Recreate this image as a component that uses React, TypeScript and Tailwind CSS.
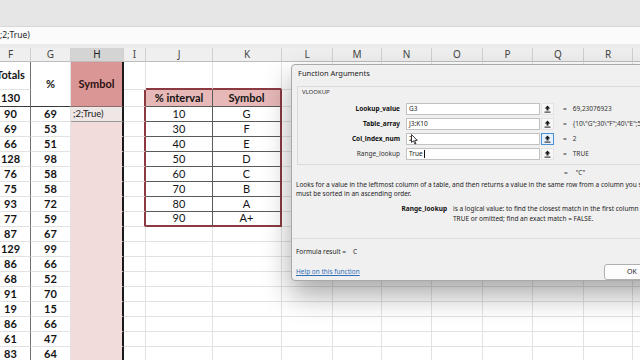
import React from "react";

const F_VALS = [90, 69, 66, 128, 76, 75, 93, 77, 87, 129, 86, 68, 91, 19, 86, 61, 83];
const G_VALS = [69, 53, 51, 98, 58, 58, 72, 59, 67, 99, 66, 52, 70, 15, 66, 47, 64];
const LOOKUP = [
  ["10", "G"],
  ["30", "F"],
  ["40", "E"],
  ["50", "D"],
  ["60", "C"],
  ["70", "B"],
  ["80", "A"],
  ["90", "A+"],
];
const LETTERS = ["F", "G", "H", "I", "J", "K", "L", "M", "N", "O", "P", "Q", "R", "S"];
const ROWS = 19;

const FIELDS = [
  { label: "Lookup_value", bold: true, value: "G3", result: "69,23076923" },
  {
    label: "Table_array",
    bold: true,
    value: "J3:K10",
    result: '{10\\"G";30\\"F";40\\"E";50\\"D";60\\"C";70\\"B";80\\"A";90\\"A+"}',
  },
  { label: "Col_index_num", bold: true, value: "2", result: "2" },
  { label: "Range_lookup", bold: false, value: "True", result: "TRUE" },
];

function Cell({ r, c }: { r: number; c: number }) {
  const inTable = (c === 4 || c === 5) && r >= 1 && r <= 9;

  let right = "border-r border-r-[#e2e2e2]";
  if (c === 0) right = "border-r border-r-[#707070]";
  else if (c === 2) right = "border-r-2 border-r-[#1a1a1a]";
  else if (c === 3 && r >= 1 && r <= 9) right = "border-r-2 border-r-[#8b3a42]";
  else if (c === 4 && inTable) right = "border-r border-r-[#5a5a5a]";
  else if (c === 5 && inTable) right = "border-r-2 border-r-[#8b3a42]";

  let bottom = "border-b border-b-[#e2e2e2]";
  if (c === 0 && r === 1) bottom = "border-b border-b-[#3a3a3a]";
  else if (c === 1 && r === 0) bottom = "border-b border-b-[#3a3a3a]";
  else if ((c === 4 || c === 5) && r === 0) bottom = "border-b-2 border-b-[#8b3a42]";
  else if (inTable && r < 9) bottom = "border-b border-b-[#5a5a5a]";
  else if (inTable && r === 9) bottom = "border-b-2 border-b-[#8b3a42]";
  else if (c === 2 && r === 0) bottom = "border-b border-b-[#8c6d6d]";
  else if (c === 2 && r === 2) bottom = "border-b border-b-[#9a9a9a]";
  else if (c === 2 && r >= 3) bottom = "border-b border-b-[#f2dcdb]";

  let bg = "";
  if (c === 2 && r === 0) bg = "bg-[#da9694]";
  else if (c === 2 && r === 2) bg = "bg-[#efe6e6]";
  else if (c === 2 && r >= 3) bg = "bg-[#f2dcdb]";
  else if (inTable && r === 1) bg = "bg-[#e6b8b7]";

  const span = (c === 1 || c === 2) && r === 0 ? "row-span-2" : "";

  let text: React.ReactNode = null;
  let style = "justify-center text-[11px] font-bold text-[#141414]";
  if (c === 0) text = r === 0 ? "Totals" : r === 1 ? "130" : F_VALS[r - 2];
  else if (c === 1) text = r === 0 ? "%" : G_VALS[r - 2];
  else if (c === 2 && r === 0) {
    text = "Symbol";
    style = "justify-center text-[11px] font-bold text-[#2d1010]";
  } else if (c === 2 && r === 2) {
    text = ";2;True)";
    style = "justify-start pl-[2px] text-[9.5px] text-[#222]";
  } else if (inTable && r === 1) text = c === 4 ? "% interval" : "Symbol";
  else if (inTable) {
    text = LOOKUP[r - 2][c - 4];
    style = "justify-center text-[11px] text-[#141414]";
  }

  return (
    <div className={`flex items-center overflow-hidden whitespace-nowrap ${right} ${bottom} ${bg} ${span} ${style}`}>
      {text}
    </div>
  );
}

function CollapseIcon() {
  return (
    <svg width="7" height="8" viewBox="0 0 7 8">
      <path d="M3.5 0.4 L6.3 3.6 H4.5 V5.6 H2.5 V3.6 H0.7 Z" fill="#1a1a1a" />
      <rect x="0.5" y="6.6" width="6" height="1" fill="#1a1a1a" />
    </svg>
  );
}

function Pointer() {
  return (
    <svg width="7" height="11" viewBox="0 0 7 11" className="absolute left-[4px] top-[0px]">
      <path d="M0.5 0.5 L0.5 8.5 L2.5 6.8 L3.9 10 L5 9.5 L3.7 6.4 L6.3 6.4 Z" fill="#fff" stroke="#111" strokeWidth="0.8" />
    </svg>
  );
}

function FunctionDialog() {
  return (
    <div className="absolute left-[291px] top-[64px] w-[380px] h-[217px] rounded-[4px] border border-[#a9a9a9] bg-[#f0f0f0] shadow-[0_14px_28px_rgba(0,0,0,0.34)] font-['Noto_Sans',sans-serif] text-[6.5px] text-[#1e1e1e] flex flex-col">
      <div className="h-[18px] flex items-center pl-[6px] text-[7.5px] text-[#222]">Function Arguments</div>
      <div className="mx-[5px] mt-[3px] border border-[#dadada] pb-[3px]">
        <div className="h-[10px] flex items-center pl-[4px] text-[6px] text-[#333]">VLOOKUP</div>
        <div className="mt-[4px] flex flex-col">
          {FIELDS.map((f, i) => (
            <div key={f.label} className="h-[15px] flex items-center">
              <div className={`shrink-0 w-[102px] text-right ${f.bold ? "font-bold text-[#111]" : "text-[#333]"}`}>{f.label}</div>
              <div className="relative shrink-0 ml-[6px] w-[134px] h-[12px] bg-white border border-[#c2c2c2] flex items-center pl-[2px] text-[#222]">
                {f.value}
                {i === 3 && <span className="ml-[1px] w-[1px] h-[8px] bg-[#111]" />}
                {i === 2 && <Pointer />}
              </div>
              <div
                className={`shrink-0 ml-[1px] w-[13px] h-[12px] flex items-center justify-center border ${
                  i === 2 ? "border-[#4a90d9] bg-[#e5f1fb]" : "border-[#e4e4e4] bg-[#f7f7f7]"
                }`}
              >
                <CollapseIcon />
              </div>
              <div className="shrink-0 ml-[9px] text-[#333]">=</div>
              <div className="ml-[6px] whitespace-nowrap text-[#333]">{f.result}</div>
            </div>
          ))}
        </div>
      </div>
      <div className="mt-[2px] h-[12px] flex items-center pl-[272px] text-[#333]">
        =<span className="ml-[8px]">"C"</span>
      </div>
      <div className="mt-[1px] pl-[4px] leading-[9px] whitespace-nowrap">
        <div>Looks for a value in the leftmost column of a table, and then returns a value in the same row from a column you specify. By default, the table</div>
        <div>must be sorted in an ascending order.</div>
      </div>
      <div className="mt-[6px] flex leading-[10px] whitespace-nowrap">
        <div className="shrink-0 w-[155px] text-right font-bold text-[#111]">Range_lookup</div>
        <div className="ml-[6px]">
          <div>is a logical value: to find the closest match in the first column (sorted in ascending order) =</div>
          <div>TRUE or omitted; find an exact match = FALSE.</div>
        </div>
      </div>
      <div className="mt-[14px] border-t border-[#dedede]" />
      <div className="mt-[7px] h-[12px] flex items-center pl-[4px]">
        <span className="w-[57px]">Formula result =</span>
        <span>C</span>
      </div>
      <div className="mt-[6px] h-[16px] flex items-center pl-[4px]">
        <span className="flex-1 text-[#2f6db5] underline">Help on this function</span>
        <div className="mr-[10px] w-[56px] h-[16px] rounded-[3px] border border-[#b0b0b0] bg-[#fdfdfd] flex items-center justify-center text-[7px]">
          OK
        </div>
      </div>
    </div>
  );
}

export default function App() {
  const cells: React.ReactNode[] = [];
  for (let r = 0; r < ROWS; r++) {
    for (let c = 0; c < LETTERS.length; c++) {
      if (r === 1 && (c === 1 || c === 2)) continue;
      cells.push(<Cell key={`${r}-${c}`} r={r} c={c} />);
    }
  }

  return (
    <div className="relative w-[640px] h-[360px] overflow-hidden bg-white font-['Lato',sans-serif]">
      <div className="h-[27px] bg-[#e6e6e6] border-b border-[#d8d8d8]" />
      <div className="h-[17px] bg-[#fbfbfb] flex items-center text-[8.5px] text-[#222] font-['Noto_Sans',sans-serif]">
        ;2;True)
      </div>
      <div className="h-[4px] bg-[#ebebeb]" />
      <div className="-ml-[9px] grid grid-cols-[40px_40px_53px_22px_67px_69px_51px_49px_50px_51px_50px_51px_49px_60px] grid-rows-[14px_28px_17px_repeat(17,15px)]">
        {LETTERS.map((l) => (
          <div
            key={l}
            className={`flex items-center justify-center text-[10px] border-r border-r-[#d0d0d0] border-b border-b-[#bdbdbd] font-['Noto_Sans',sans-serif] ${
              l === "H" ? "bg-[#d4d4d4] text-[#222]" : "bg-[#efefef] text-[#444]"
            }`}
          >
            {l}
          </div>
        ))}
        {cells}
      </div>
      <FunctionDialog />
    </div>
  );
}
